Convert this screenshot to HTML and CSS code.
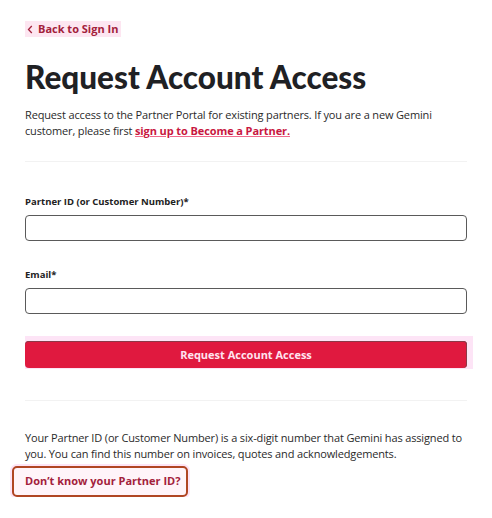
FILE: index.html
```html
<!DOCTYPE html>
<html lang="en">
<head>
    <meta charset="UTF-8">
    <meta name="viewport" content="width=device-width, initial-scale=1.0">
    <title>Request Account Access</title>
    <link rel="stylesheet" href="styles.css">
</head>
<body>
    <div class="page">
        <a class="back-link" href="#">
            <svg class="back-icon" width="6" height="9" viewBox="0 0 6 9"><path d="M4.8 1 L1.5 4.5 L4.8 8" fill="none" stroke="#a3213b" stroke-width="1.3"/></svg>
            Back to Sign In
        </a>

        <h1 class="title">Request Account Access</h1>

        <p class="intro">
            Request access to the Partner Portal for existing partners. If you are a new Gemini
            customer, please first <a class="signup-link" href="#">sign up to Become a Partner.</a>
        </p>

        <hr class="divider">

        <form class="request-form">
            <label class="field-label" for="partner-id">Partner ID (or Customer Number)*</label>
            <input type="text" class="field-input" id="partner-id">

            <label class="field-label email-label" for="email">Email*</label>
            <input type="email" class="field-input" id="email">

            <div class="submit-wrap">
                <button type="button" class="submit-btn">Request Account Access</button>
            </div>
        </form>

        <hr class="divider lower">

        <p class="help-text">
            Your Partner ID (or Customer Number) is a six-digit number that Gemini has assigned to
            you. You can find this number on invoices, quotes and acknowledgements.
        </p>

        <a class="help-link" href="#">Don’t know your Partner ID?</a>
    </div>
</body>
</html>
```

FILE: styles.css
```css
* {
    box-sizing: border-box;
}

body {
    margin: 0;
    font-family: 'Open Sans', 'Noto Sans', sans-serif;
    background-color: #ffffff;
    color: #222222;
}

.page {
    display: flex;
    flex-direction: column;
    align-items: flex-start;
    padding: 21px 25px 0 25px;
}

.back-link {
    display: flex;
    align-items: center;
    gap: 5px;
    padding: 1px 3px 1px 2px;
    background-color: #fde6f1;
    color: #a3213b;
    font-size: 11px;
    font-weight: 700;
    line-height: 14px;
    text-decoration: none;
    white-space: nowrap;
}

.title {
    margin: 22px 0 0 0;
    font-family: Lato, 'Open Sans', sans-serif;
    font-size: 31.5px;
    font-weight: 900;
    line-height: 36px;
    color: #1f2124;
}

.intro,
.help-text {
    margin: 12px 0 0 0;
    font-size: 11px;
    line-height: 16px;
    letter-spacing: -0.15px;
    color: #2a2a2a;
}

.signup-link {
    color: #c8173f;
    font-weight: 700;
    letter-spacing: -0.1px;
    text-decoration: underline;
    text-decoration-color: #f06b8d;
}

.divider {
    align-self: stretch;
    border: none;
    border-top: 1px solid #f2f2f2;
    margin: 22px 0 0 0;
}

.request-form {
    align-self: stretch;
    display: flex;
    flex-direction: column;
    padding-top: 34px;
}

.field-label {
    font-size: 9.5px;
    font-weight: 700;
    line-height: 12px;
    color: #222222;
}

.field-input {
    margin-top: 7px;
    height: 26px;
    border: 1px solid #5a5a5a;
    border-radius: 4px;
    background-color: #ffffff;
}

.email-label {
    margin-top: 28px;
}

.submit-wrap {
    margin-top: 22px;
    padding: 5px 6px 1px 0;
    margin-right: -6px;
    background-color: #fde4f6;
}

.submit-btn {
    display: block;
    width: 100%;
    height: 27px;
    border: none;
    border-radius: 4px;
    background-color: #e0193f;
    box-shadow: inset 0 1px 0 #8a3a48, inset -1px 0 0 #8a3a48;
    color: #ffe3ef;
    font-family: inherit;
    font-size: 11px;
    font-weight: 700;
}

.lower {
    margin-top: 31px;
}

.help-text {
    margin-top: 29px;
}

.help-link {
    margin: 4px 0 0 -13px;
    padding: 5px 6px 6px 11px;
    border: 2px solid #b04623;
    border-radius: 5px;
    background-color: #fff4f9;
    box-shadow: 0 0 0 2px #fde4f6;
    color: #a3213b;
    font-size: 11px;
    font-weight: 700;
    line-height: 16px;
    text-decoration: none;
    white-space: nowrap;
}
```
